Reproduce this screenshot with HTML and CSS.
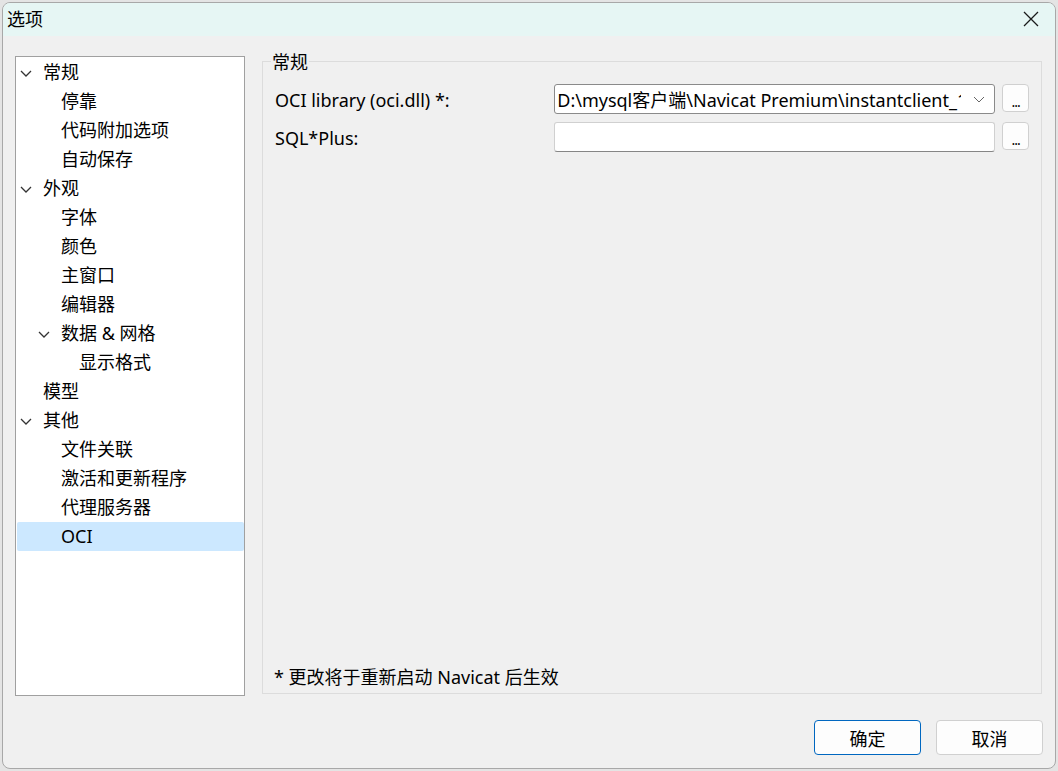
FILE: index.html
```html
<!DOCTYPE html>
<html lang="zh-CN">
<head>
  <meta charset="UTF-8">
  <title>选项</title>
  <link rel="stylesheet" href="styles.css">
</head>
<body>

  <div class="window">
    <div class="titlebar">
      <span class="title">选项</span>
      <span class="close">
        <svg width="16" height="16" viewBox="0 0 16 16"><path d="M1 1 L15 15 M15 1 L1 15" stroke="#1a1a1a" stroke-width="1.3" fill="none"/></svg>
      </span>
    </div>

    <div class="content">
      <div class="main">
        <ul class="tree">
          <li class="row lv0"><svg class="chev" width="12" height="7" viewBox="0 0 12 7"><polyline points="1,1 6,6 11,1" fill="none" stroke="#333" stroke-width="1.3"/></svg>常规</li>
          <li class="row lv1">停靠</li>
          <li class="row lv1">代码附加选项</li>
          <li class="row lv1">自动保存</li>
          <li class="row lv0"><svg class="chev" width="12" height="7" viewBox="0 0 12 7"><polyline points="1,1 6,6 11,1" fill="none" stroke="#333" stroke-width="1.3"/></svg>外观</li>
          <li class="row lv1">字体</li>
          <li class="row lv1">颜色</li>
          <li class="row lv1">主窗口</li>
          <li class="row lv1">编辑器</li>
          <li class="row lv1"><svg class="chev" width="12" height="7" viewBox="0 0 12 7"><polyline points="1,1 6,6 11,1" fill="none" stroke="#333" stroke-width="1.3"/></svg>数据 &amp; 网格</li>
          <li class="row lv2">显示格式</li>
          <li class="row lv0">模型</li>
          <li class="row lv0"><svg class="chev" width="12" height="7" viewBox="0 0 12 7"><polyline points="1,1 6,6 11,1" fill="none" stroke="#333" stroke-width="1.3"/></svg>其他</li>
          <li class="row lv1">文件关联</li>
          <li class="row lv1">激活和更新程序</li>
          <li class="row lv1">代理服务器</li>
          <li class="row lv1 selected">OCI</li>
        </ul>

        <fieldset class="group">
          <legend>常规</legend>
          <div class="field">
            <label>OCI library (oci.dll) *:</label>
            <div class="combo">
              <span class="combo-text">D:\mysql客户端\Navicat Premium\instantclient_11_2\oci.dll</span>
              <svg class="combo-arrow" width="12" height="7" viewBox="0 0 12 7"><polyline points="1,1 6,6 11,1" fill="none" stroke="#666" stroke-width="1"/></svg>
            </div>
            <button class="dots">...</button>
          </div>
          <div class="field">
            <label>SQL*Plus:</label>
            <div class="edit"></div>
            <button class="dots">...</button>
          </div>
          <p class="note">* 更改将于重新启动 Navicat 后生效</p>
        </fieldset>
      </div>

      <div class="actions">
        <button class="btn default">确定</button>
        <button class="btn">取消</button>
      </div>
    </div>
  </div>

</body>
</html>
```

FILE: styles.css
```css
/* ダイアログ全体 */
body {
  margin: 0;
  background: #e4e4e4;
  font-family: "Noto Sans", "Noto Sans CJK SC", sans-serif;
  font-size: 18px;
  color: #000;
}

.window {
  box-sizing: border-box;
  width: 1054px;
  height: 767px;
  margin: 2px 0 0 2px;
  border: 1px solid #a8a8a8;
  border-radius: 8px;
  background: #f0f0f0;
  overflow: hidden;
  display: flex;
  flex-direction: column;
}

.titlebar {
  height: 33px;
  background: #e6f6f4;
  display: flex;
  align-items: center;
  justify-content: space-between;
  padding: 0 16px 3px 4px;
  box-sizing: border-box;
  flex-shrink: 0;
}

.title {
  font-size: 18px;
}

.close {
  display: flex;
  margin-top: 1px;
}

.content {
  flex: 1;
  display: flex;
  flex-direction: column;
  padding: 20px 12px 12px 12px;
}

.main {
  display: flex;
  gap: 17px;
  height: 640px;
}

/* ツリー */
.tree {
  box-sizing: border-box;
  width: 230px;
  height: 640px;
  margin: 0;
  padding: 1px 0 0 1px;
  list-style: none;
  background: #fff;
  border: 1px solid #a0a0a0;
}

.row {
  position: relative;
  height: 29px;
  line-height: 29px;
  white-space: nowrap;
  padding-right: 1px;
}

.lv0 { padding-left: 26px; }
.lv1 { padding-left: 44px; }
.lv2 { padding-left: 62px; }

.chev {
  position: absolute;
  top: 12px;
}

.lv0 .chev { left: 3px; }
.lv1 .chev { left: 21px; }

.selected {
  background: #cce8ff;
  border-radius: 2px;
}

/* グループボックス */
.group {
  box-sizing: border-box;
  width: 780px;
  height: 646px;
  margin: 0;
  margin-top: -8px;
  padding: 10px 12px 4px 11px;
  border: 1px solid #dcdcdc;
  display: flex;
  flex-direction: column;
  gap: 8px;
  min-width: 0;
}

.group legend {
  padding: 0 1px;
  margin-left: -3px;
}

.field {
  display: flex;
  align-items: center;
  height: 30px;
}

.field label {
  width: 280px;
  padding-left: 1px;
  padding-top: 2px;
}

.combo, .edit {
  box-sizing: border-box;
  width: 442px;
  height: 30px;
  background: #fff;
  border: 1px solid #d0d0d0;
  border-bottom-color: #868686;
  border-radius: 3px;
}

.combo {
  display: flex;
  align-items: center;
  border-color: #8a8a8a;
  padding-left: 2px;
  overflow: hidden;
}

.combo-text {
  flex: 1;
  overflow: hidden;
  white-space: nowrap;
  padding-bottom: 1px;
}

.combo-arrow {
  margin: 0 9px 0 12px;
  flex-shrink: 0;
}

.dots {
  box-sizing: border-box;
  width: 27px;
  height: 28px;
  margin-left: 7px;
  padding: 0 0 2px 0;
  background: #fdfdfd;
  border: 1px solid #d0d0d0;
  border-radius: 4px;
  font-family: inherit;
  font-size: 14px;
  line-height: 14px;
  letter-spacing: -1px;
  align-self: flex-start;
  display: flex;
  align-items: flex-end;
  justify-content: center;
  overflow: hidden;
}

.note {
  margin: auto 0 0 0;
  line-height: 24px;
}

/* ボタン */
.actions {
  display: flex;
  justify-content: flex-end;
  gap: 15px;
  margin-top: 24px;
}

.btn {
  box-sizing: border-box;
  width: 107px;
  height: 35px;
  background: #fdfdfd;
  border: 1px solid #d0d0d0;
  border-radius: 4px;
  font-family: inherit;
  font-size: 18px;
  color: #000;
}

.btn.default {
  border-color: #0067c0;
}
```
